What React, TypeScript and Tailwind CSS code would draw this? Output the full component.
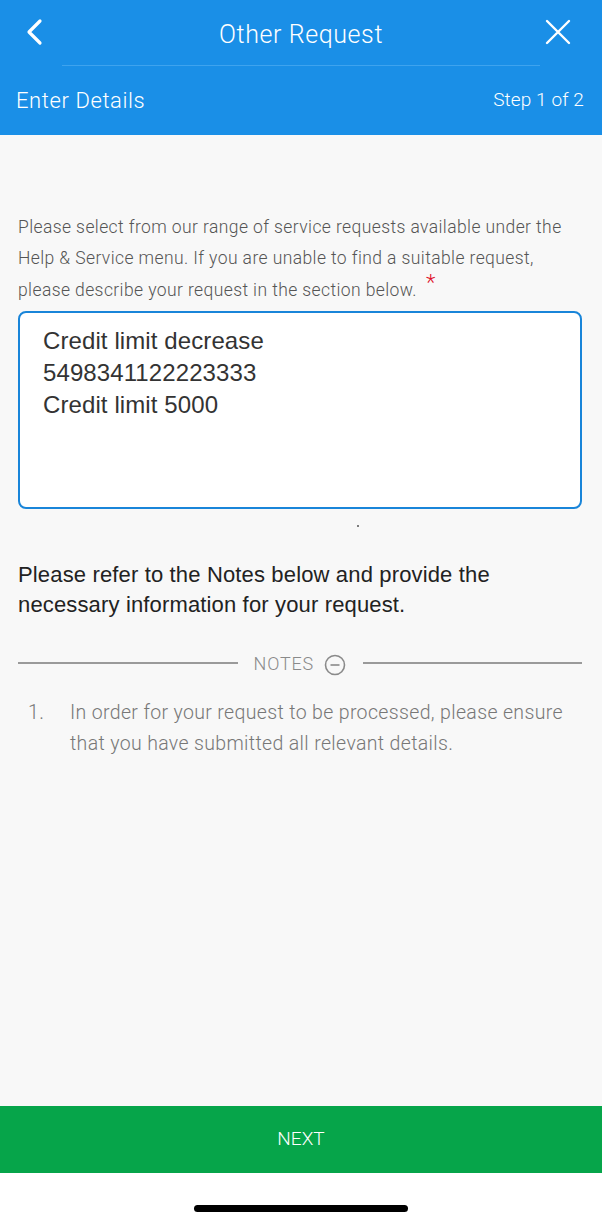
import React from 'react';

const sans = { fontFamily: '"Liberation Sans", Arial, sans-serif' };
const light = { fontFamily: 'Roboto, "Liberation Sans", sans-serif', fontWeight: 300 };

export default function App() {
  return (
    <div className="h-[1213px] w-full flex flex-col bg-[#f8f8f8] overflow-hidden" style={sans}>
      {/* Header */}
      <div className="flex-none h-[135px] bg-[#1a8fe7] text-white flex flex-col">
        <div className="h-[65px] flex items-center justify-between pl-[25px] pr-[30px] relative">
          <svg width="22" height="28" viewBox="0 0 22 28" fill="none" className="-mt-[2px]">
            <path d="M15 3L4 14l11 11" stroke="white" strokeWidth="3.2" strokeLinecap="round" strokeLinejoin="round" />
          </svg>
          <div className="absolute left-0 right-0 top-[19px] text-center text-[25px] leading-[32px] tracking-[0.6px] pointer-events-none" style={light}>
            Other Request
          </div>
          <svg width="28" height="28" viewBox="0 0 28 28" fill="none" className="-mt-[2px]">
            <path d="M3 3l22 22M25 3L3 25" stroke="white" strokeWidth="2.4" strokeLinecap="round" />
          </svg>
        </div>
        <div className="mx-[62px] h-px bg-[#3ea3ee]" />
        <div className="flex-1 flex items-center justify-between pl-[16px] pr-[18px] pb-[1px]" style={light}>
          <span className="text-[22px] tracking-[0.6px]">Enter Details</span>
          <span className="text-[19px] tracking-[0.1px]">Step 1 of 2</span>
        </div>
      </div>

      {/* Body */}
      <div className="flex-1 flex flex-col pl-[18px] pr-[20px] pt-[77px]">
        <p className="text-[17.5px] leading-[31px] tracking-[0.4px] text-[#555]" style={light}>
          Please select from our range of service requests available under the Help &amp; Service menu. If you are unable to find a suitable request, please describe your request in the section below.
          <span className="ml-[9px] inline-block h-[12px] text-[#e0102a] text-[22px] leading-[18px] align-[6px]">*</span>
        </p>

        <div className="mt-[5px] h-[198px] w-full rounded-[8px] border-2 border-[#1985d9] bg-white pl-[23px] pt-[12px] text-[24px] leading-[32px] tracking-[0.1px] text-[#333]">
          <div>Credit limit decrease</div>
          <div>5498341122223333</div>
          <div>Credit limit 5000</div>
        </div>
        <div className="flex justify-center h-[34px] items-center">
          <span className="ml-[116px] w-[2px] h-[2px] bg-[#555] rounded-full" />
        </div>

        <h2 className="mt-[17px] text-[22px] leading-[30px] text-[#222] tracking-[0.15px]">
          Please refer to the Notes below and provide the necessary information for your request.
        </h2>

        <div className="mt-[31px] flex items-center h-[24px]" style={light}>
          <div className="flex-1 h-[2px] bg-[#9a9a9a]" />
          <span className="ml-[16px] text-[18px] text-[#8a8a8a] tracking-[0.8px]">NOTES</span>
          <svg width="22" height="22" viewBox="0 0 22 22" fill="none" className="ml-[10px] mt-[3px]">
            <circle cx="11" cy="11" r="9.5" stroke="#8a8a8a" strokeWidth="1.6" />
            <path d="M6.5 11h9" stroke="#8a8a8a" strokeWidth="1.6" />
          </svg>
          <div className="ml-[17px] w-[219px] h-[2px] bg-[#9a9a9a]" />
        </div>

        <div className="mt-[22px] flex text-[19.5px] leading-[31px] tracking-[0.35px] text-[#777]" style={light}>
          <span className="w-[52px] pl-[10px] flex-none">1.</span>
          <span className="pr-[6px]">In order for your request to be processed, please ensure that you have submitted all relevant details.</span>
        </div>
      </div>

      {/* Footer */}
      <button className="flex-none h-[67px] w-full bg-[#06a54a] text-white text-[19px] flex items-center justify-center" style={light}>
        NEXT
      </button>
      <div className="flex-none h-[40px] bg-white flex items-end justify-center pb-[1px]">
        <div className="w-[214px] h-[7px] rounded-full bg-black" />
      </div>
    </div>
  );
}
